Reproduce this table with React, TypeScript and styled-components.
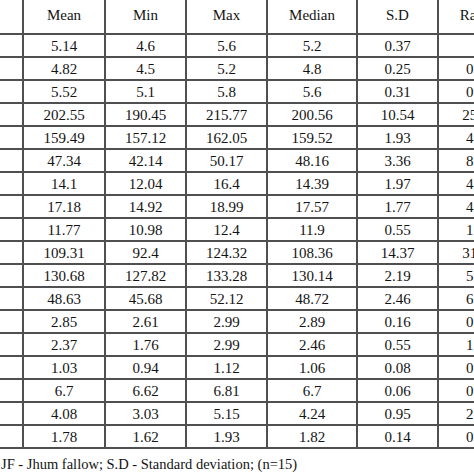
import React from "react";
import styled, { createGlobalStyle } from "styled-components";

const Global = createGlobalStyle`
  html, body { margin: 0; padding: 0; background: #ffffff; }
  body { width: 474px; height: 474px; overflow: hidden; }
`;

const Page = styled.div`
  width: 474px;
  height: 474px;
  overflow: hidden;
  background: #ffffff;
  font-family: "Liberation Serif", "Times New Roman", serif;
  color: #141414;
`;

const Grid = styled.div`
  display: grid;
  grid-template-columns: 22px 80px 79px 79px 88px 79px 80px;
  grid-template-rows: 33px repeat(18, 21px);
  column-gap: 2px;
  row-gap: 2px;
  width: 516px;
  background: #505050;
  padding-bottom: 2px;
`;

const Cell = styled.div<{ $head?: boolean }>`
  background: #ffffff;
  display: flex;
  align-items: center;
  justify-content: center;
  font-size: 15px;
  line-height: 17px;
  white-space: nowrap;
  overflow: visible;
  padding-bottom: ${(p) => (p.$head ? "3px" : "0")};
  padding-top: ${(p) => (p.$head ? "0" : "1px")};
  box-sizing: border-box;
`;

const Footer = styled.div`
  margin-top: 7px;
  padding-left: 1px;
  font-size: 14.5px;
  line-height: 17px;
  white-space: nowrap;
  color: #141414;
`;

const headers = ["", "Mean", "Min", "Max", "Median", "S.D", "Range"];

const rows: string[][] = [
  ["5.14", "4.6", "5.6", "5.2", "0.37", "1"],
  ["4.82", "4.5", "5.2", "4.8", "0.25", "0.70"],
  ["5.52", "5.1", "5.8", "5.6", "0.31", "0.70"],
  ["202.55", "190.45", "215.77", "200.56", "10.54", "25.32"],
  ["159.49", "157.12", "162.05", "159.52", "1.93", "4.93"],
  ["47.34", "42.14", "50.17", "48.16", "3.36", "8.03"],
  ["14.1", "12.04", "16.4", "14.39", "1.97", "4.36"],
  ["17.18", "14.92", "18.99", "17.57", "1.77", "4.07"],
  ["11.77", "10.98", "12.4", "11.9", "0.55", "1.42"],
  ["109.31", "92.4", "124.32", "108.36", "14.37", "31.92"],
  ["130.68", "127.82", "133.28", "130.14", "2.19", "5.46"],
  ["48.63", "45.68", "52.12", "48.72", "2.46", "6.44"],
  ["2.85", "2.61", "2.99", "2.89", "0.16", "0.38"],
  ["2.37", "1.76", "2.99", "2.46", "0.55", "1.23"],
  ["1.03", "0.94", "1.12", "1.06", "0.08", "0.18"],
  ["6.7", "6.62", "6.81", "6.7", "0.06", "0.19"],
  ["4.08", "3.03", "5.15", "4.24", "0.95", "2.12"],
  ["1.78", "1.62", "1.93", "1.82", "0.14", "0.31"],
];

export default function App() {
  return (
    <Page>
      <Global />
      <Grid>
        {headers.map((h, i) => (
          <Cell key={`h${i}`} $head>
            {h}
          </Cell>
        ))}
        {rows.map((r, ri) => (
          <React.Fragment key={ri}>
            <Cell />
            {r.map((v, ci) => (
              <Cell key={ci}>{v}</Cell>
            ))}
          </React.Fragment>
        ))}
      </Grid>
      <Footer>JF - Jhum fallow; S.D - Standard deviation; (n=15)</Footer>
    </Page>
  );
}
